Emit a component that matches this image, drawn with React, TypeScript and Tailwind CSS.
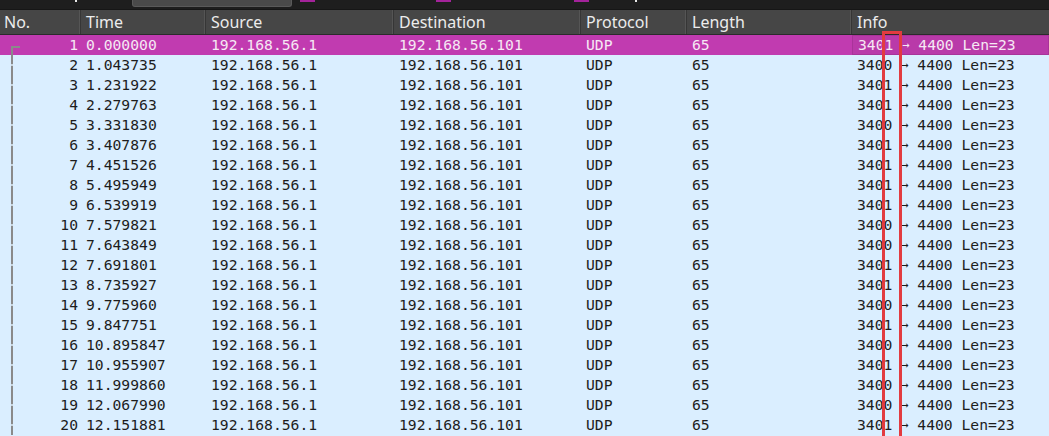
import React from "react";

const mono = { fontFamily: '"DejaVu Sans Mono", "Liberation Mono", monospace' };

const packets: [number, string, string][] = [
  [1, "0.000000", "3401"],
  [2, "1.043735", "3400"],
  [3, "1.231922", "3401"],
  [4, "2.279763", "3401"],
  [5, "3.331830", "3400"],
  [6, "3.407876", "3401"],
  [7, "4.451526", "3401"],
  [8, "5.495949", "3401"],
  [9, "6.539919", "3401"],
  [10, "7.579821", "3400"],
  [11, "7.643849", "3400"],
  [12, "7.691801", "3401"],
  [13, "8.735927", "3401"],
  [14, "9.775960", "3400"],
  [15, "9.847751", "3401"],
  [16, "10.895847", "3400"],
  [17, "10.955907", "3401"],
  [18, "11.999860", "3400"],
  [19, "12.067990", "3400"],
  [20, "12.151881", "3401"],
];

const columns = [
  { label: "No.", w: "w-[81px]" },
  { label: "Time", w: "w-[125px]" },
  { label: "Source", w: "w-[188px]" },
  { label: "Destination", w: "w-[187px]" },
  { label: "Protocol", w: "w-[106px]" },
  { label: "Length", w: "w-[165px]" },
  { label: "Info", w: "flex-1" },
];

const App = () => {
  return (
    <div className="relative w-[1049px] h-[436px] overflow-hidden bg-[#daeeff]">
      {/* Toolbar remnant */}
      <div className="flex items-start h-[10px] bg-[#1e1e1e] border-b border-[#161616]">
        <div className="ml-[75px] w-[2px] h-[2px] bg-[#e8e8e8]" />
        <div className="ml-[55px] w-[160px] h-[7px] bg-[#4a4a4a] border border-t-0 border-[#5a5a5a] rounded-b-[3px]" />
        <div className="ml-[8px] w-[15px] h-[2px] bg-[#a3239a]" />
        <div className="ml-[121px] w-[15px] h-[2px] bg-[#a3239a]" />
        <div className="ml-[123px] w-[15px] h-[2px] bg-[#a3239a]" />
        <div className="ml-[46px] w-[2px] h-[2px] bg-[#e8e8e8]" />
      </div>

      {/* Column headers */}
      <div
        className="flex h-[25px] bg-[#464646] border-b border-[#2b2b2b] text-[16px] text-[#ececec]"
        style={{ fontFamily: '"Noto Sans", "Open Sans", sans-serif' }}
      >
        {columns.map((c, i) => (
          <div
            key={c.label}
            className={`${c.w} flex items-center ${i === 0 ? "pl-[4px]" : "pl-[5px]"} ${
              i < columns.length - 1 ? "border-r border-[#363636] shadow-[inset_-1px_0_0_#555]" : ""
            }`}
          >
            {c.label}
          </div>
        ))}
      </div>

      {/* Packet rows */}
      <div className="text-[14.7px]" style={mono}>
        {packets.map(([no, time, port], idx) => {
          const selected = idx === 0;
          return (
            <div
              key={no}
              className={`flex h-[20px] items-center whitespace-pre ${
                selected ? "bg-[#c13bb0] text-[#f6e8f4]" : "text-[#1d1d1d]"
              }`}
            >
              <div className="w-[81px] h-full flex items-center pr-[3px]">
                {selected ? (
                  <div className="ml-[11px] mt-[11px] self-stretch w-[9px] border-l-2 border-t-2 border-[#8a8a8a]" />
                ) : (
                  <div className="ml-[11px] self-stretch w-[2px] flex flex-col bg-[#8a8a8a]">
                    <div className="mt-[9px] h-[2px] bg-[#c8d4de]" />
                  </div>
                )}
                <span className="ml-auto">{no}</span>
              </div>
              <div className="w-[125px] pl-[5px]">{time}</div>
              <div className="w-[188px] pl-[5px]">192.168.56.1</div>
              <div className="w-[187px] pl-[5px]">192.168.56.101</div>
              <div className="w-[106px] pl-[5px]">UDP</div>
              <div className="w-[165px] pl-[5px]">65</div>
              <div
                className={`flex-1 h-full flex items-center pl-[5px] ${
                  selected ? "bg-[#b93aa9] border border-[#a9339a]" : ""
                }`}
              >
                {port} <span className="text-[12px]">→</span> 4400 Len=23
              </div>
            </div>
          );
        })}
      </div>

      {/* Highlight box drawn over the Info column */}
      <div className="absolute left-[882px] top-[31px] w-[20px] h-[420px] border-[3px] border-[#e23b40]" />
    </div>
  );
};

export default App;
